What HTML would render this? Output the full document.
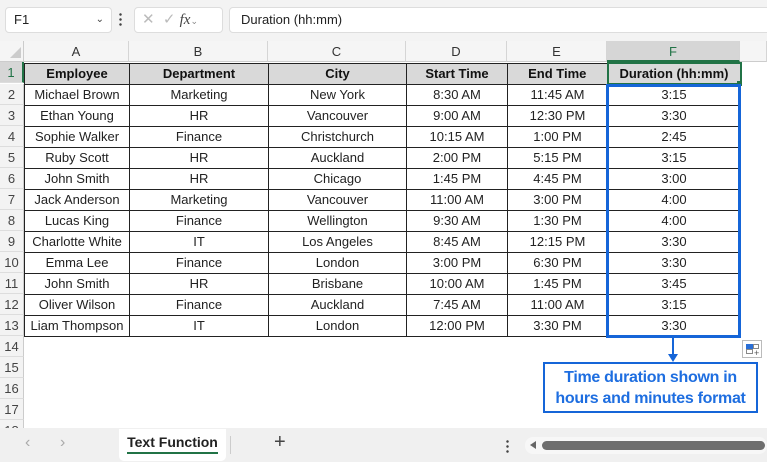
<!DOCTYPE html>
<html><head><meta charset="utf-8"><style>
*{box-sizing:border-box;margin:0;padding:0}
body{width:767px;height:462px;overflow:hidden;background:#fff;font-family:"Liberation Sans",sans-serif;position:relative}
.a{position:absolute}
table{border-collapse:collapse;table-layout:fixed;position:absolute;left:24px;top:62px}
td{border:1px solid #222;height:21px;text-align:center;font-size:13px;color:#222;white-space:nowrap;overflow:hidden;padding:0;line-height:19px}
tr.h td{background:#d9d9d9;font-weight:bold;color:#111}
.rh{position:absolute;left:0;width:24px;height:21px;background:#f3f3f3;border-right:1px solid #ccc;border-bottom:1px solid #ddd;font-size:13px;color:#444;text-align:center;line-height:21px}
.ch{position:absolute;top:41px;height:21px;background:#f5f5f5;border-right:1px solid #d5d5d5;border-bottom:1px solid #ccc;font-size:13px;color:#333;text-align:center;line-height:21px}
</style></head><body>
<!-- top bar -->
<div class="a" style="left:0;top:0;width:767px;height:41px;background:#f3f3f3"></div>
<div class="a" style="left:5px;top:7px;width:107px;height:26px;background:#fff;border:1px solid #ddd;border-radius:4px;font-size:13px;line-height:24px;padding-left:8px;color:#222">F1<span style="position:absolute;right:7px;top:0;font-size:10px;color:#444">&#8964;</span></div>
<div class="a" style="left:119px;top:12px;width:3px;height:16px;background:radial-gradient(circle,#444 1px,transparent 1.5px) 0 0/3px 5px"></div>
<div class="a" style="left:134px;top:7px;width:89px;height:26px;background:#fff;border:1px solid #ddd;border-radius:4px;color:#bbb;font-size:15px;line-height:24px;padding-left:7px">✕ &nbsp;✓ <i style="color:#444;font-family:'Liberation Serif',serif;font-size:15px">fx</i><span style="font-size:9px;color:#888">&#8964;</span></div>
<div class="a" style="left:229px;top:7px;width:545px;height:26px;background:#fff;border:1px solid #ddd;border-radius:4px;font-size:13px;line-height:24px;padding-left:11px;color:#222">Duration (hh:mm)</div>
<!-- column headers -->
<div class="a" style="left:0;top:41px;width:24px;height:21px;background:#f5f5f5;border-right:1px solid #ccc;border-bottom:1px solid #ccc"></div>
<div class="a" style="left:10px;top:47px;width:0;height:0;border-left:11px solid transparent;border-bottom:11px solid #ccc"></div>
<div class="ch" style="left:24px;width:105px">A</div>
<div class="ch" style="left:129px;width:139px">B</div>
<div class="ch" style="left:268px;width:138px">C</div>
<div class="ch" style="left:406px;width:101px">D</div>
<div class="ch" style="left:507px;width:100px">E</div>
<div class="ch" style="left:607px;width:133px;background:#d6d6d6;color:#217346;border-bottom:2px solid #217346">F</div>
<div class="ch" style="left:740px;width:27px"></div>
<!-- row headers -->
<div class="rh" style="top:62px;background:#d6d6d6;color:#217346;border-right:2px solid #217346">1</div>
<div class="rh" style="top:84px">2</div><div class="rh" style="top:105px">3</div><div class="rh" style="top:126px">4</div><div class="rh" style="top:147px">5</div><div class="rh" style="top:168px">6</div><div class="rh" style="top:189px">7</div><div class="rh" style="top:210px">8</div><div class="rh" style="top:231px">9</div><div class="rh" style="top:252px">10</div><div class="rh" style="top:273px">11</div><div class="rh" style="top:294px">12</div><div class="rh" style="top:315px">13</div><div class="rh" style="top:336px">14</div><div class="rh" style="top:357px">15</div><div class="rh" style="top:378px">16</div><div class="rh" style="top:399px">17</div><div class="rh" style="top:420px">18</div>
<table>
<colgroup><col style="width:105px"><col style="width:139px"><col style="width:138px"><col style="width:101px"><col style="width:100px"><col style="width:133px"></colgroup>
<tr class="h"><td>Employee</td><td>Department</td><td>City</td><td>Start Time</td><td>End Time</td><td style="border:2px solid #217346">Duration (hh:mm)</td></tr>
<tr><td>Michael Brown</td><td>Marketing</td><td>New York</td><td>8:30 AM</td><td>11:45 AM</td><td>3:15</td></tr>
<tr><td>Ethan Young</td><td>HR</td><td>Vancouver</td><td>9:00 AM</td><td>12:30 PM</td><td>3:30</td></tr>
<tr><td>Sophie Walker</td><td>Finance</td><td>Christchurch</td><td>10:15 AM</td><td>1:00 PM</td><td>2:45</td></tr>
<tr><td>Ruby Scott</td><td>HR</td><td>Auckland</td><td>2:00 PM</td><td>5:15 PM</td><td>3:15</td></tr>
<tr><td>John Smith</td><td>HR</td><td>Chicago</td><td>1:45 PM</td><td>4:45 PM</td><td>3:00</td></tr>
<tr><td>Jack Anderson</td><td>Marketing</td><td>Vancouver</td><td>11:00 AM</td><td>3:00 PM</td><td>4:00</td></tr>
<tr><td>Lucas King</td><td>Finance</td><td>Wellington</td><td>9:30 AM</td><td>1:30 PM</td><td>4:00</td></tr>
<tr><td>Charlotte White</td><td>IT</td><td>Los Angeles</td><td>8:45 AM</td><td>12:15 PM</td><td>3:30</td></tr>
<tr><td>Emma Lee</td><td>Finance</td><td>London</td><td>3:00 PM</td><td>6:30 PM</td><td>3:30</td></tr>
<tr><td>John Smith</td><td>HR</td><td>Brisbane</td><td>10:00 AM</td><td>1:45 PM</td><td>3:45</td></tr>
<tr><td>Oliver Wilson</td><td>Finance</td><td>Auckland</td><td>7:45 AM</td><td>11:00 AM</td><td>3:15</td></tr>
<tr><td>Liam Thompson</td><td>IT</td><td>London</td><td>12:00 PM</td><td>3:30 PM</td><td>3:30</td></tr>
</table>
<div class="a" style="left:737px;top:81px;width:5px;height:5px;background:#217346"></div>
<!-- blue highlight -->
<div class="a" style="left:606px;top:84px;width:135px;height:254px;border:3px solid #1565d8"></div>
<div class="a" style="left:672px;top:338px;width:2px;height:18px;background:#1565d8"></div>
<div class="a" style="left:668px;top:354px;width:0;height:0;border-left:5px solid transparent;border-right:5px solid transparent;border-top:8px solid #1565d8"></div>
<div class="a" style="left:742px;top:340px;width:20px;height:18px;border:1px solid #bbb;background:#fff"><div class="a" style="left:3px;top:3px;width:7px;height:5px;background:#2a6fd6"></div><div class="a" style="left:10px;top:3px;width:6px;height:5px;border:1px solid #888"></div><div class="a" style="left:3px;top:8px;width:7px;height:5px;border:1px solid #888"></div><div class="a" style="left:11px;top:8px;font-size:9px;color:#555;line-height:8px">+</div></div>
<div class="a" style="left:543px;top:362px;width:215px;height:51px;border:2px solid #1565d8;background:#fff;color:#1e6ee0;font-size:16px;font-weight:bold;text-align:center;line-height:21px;padding-top:3px;letter-spacing:-0.3px">Time duration shown in<br>hours and minutes format</div>
<!-- tab bar -->
<div class="a" style="left:0;top:428px;width:767px;height:34px;background:#f0f0f0"></div>
<div class="a" style="left:25px;top:434px;font-size:16px;color:#aaa">&#8249;</div>
<div class="a" style="left:60px;top:434px;font-size:16px;color:#aaa">&#8250;</div>
<div class="a" style="left:119px;top:429px;width:107px;height:32px;background:#fff;border-radius:0 0 5px 5px;font-size:14px;font-weight:bold;color:#222;text-align:center;line-height:26px">Text Function<div class="a" style="left:8px;top:23px;width:91px;height:2px;background:#217346"></div></div>
<div class="a" style="left:230px;top:436px;width:1px;height:18px;background:#ccc"></div>
<div class="a" style="left:274px;top:431px;font-size:20px;color:#444">+</div>
<div class="a" style="left:506px;top:439px;width:3px;height:14px;background:radial-gradient(circle,#444 1px,transparent 1.5px) 0 0/3px 5px"></div>
<div class="a" style="left:525px;top:437px;width:242px;height:17px;background:#f7f7f7;border-radius:8px"></div>
<div class="a" style="left:530px;top:441px;width:0;height:0;border-top:4px solid transparent;border-bottom:4px solid transparent;border-right:6px solid #666"></div>
<div class="a" style="left:542px;top:441px;width:223px;height:9px;background:#6e6e6e;border-radius:5px"></div>
</body></html>
